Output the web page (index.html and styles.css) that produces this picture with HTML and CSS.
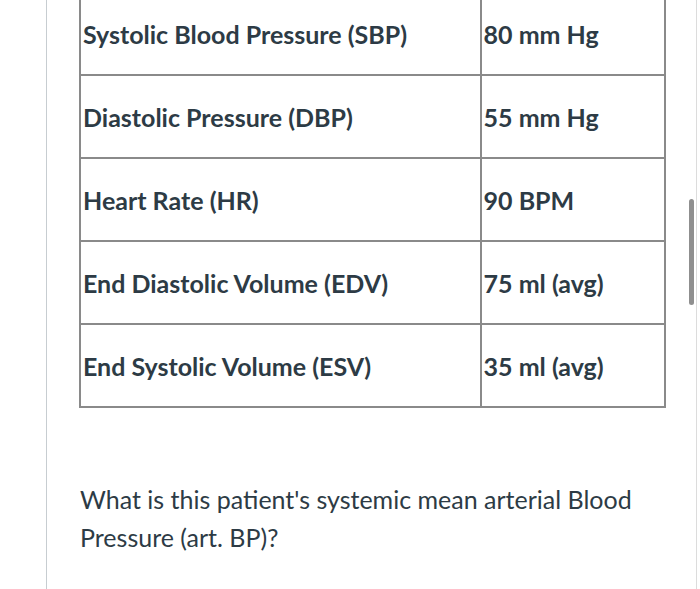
FILE: index.html
```html
<!DOCTYPE html>
<html lang="en">
<head>
<meta charset="utf-8">
<title>Question</title>
<link rel="stylesheet" href="styles.css">
</head>
<body>
<div class="page">
  <table class="vitals">
    <tr><td class="label">Systolic Blood Pressure (SBP)</td><td class="value">80 mm Hg</td></tr>
    <tr><td class="label">Diastolic Pressure (DBP)</td><td class="value">55 mm Hg</td></tr>
    <tr><td class="label">Heart Rate (HR)</td><td class="value">90 BPM</td></tr>
    <tr><td class="label">End Diastolic Volume (EDV)</td><td class="value">75 ml (avg)</td></tr>
    <tr><td class="label">End Systolic Volume (ESV)</td><td class="value">35 ml (avg)</td></tr>
  </table>
  <p class="question">What is this patient's systemic mean arterial Blood Pressure (art. BP)?</p>
</div>
<div class="scrollbar"></div>
</body>
</html>
```
FILE: styles.css
```css
html, body {
  margin: 0;
  padding: 0;
  background: #fff;
  height: 100%;
  overflow: hidden;
}
body {
  font-family: Lato, "Noto Sans", sans-serif;
  color: #2d3b45;
}
.page {
  margin-left: 46px;
  width: 651px;
  height: 620px;
  border-left: 1px solid #c7cdd1;
  border-right: 1px solid #dcdcdc;
  padding-left: 32px;
  box-sizing: border-box;
}
.vitals {
  border-collapse: collapse;
  margin-top: -9px;
  width: 587px;
}
.vitals td {
  border: 2px solid #8a8a8a;
  height: 83px;
  padding: 0 0 0 2px;
  font-size: 25px;
  font-weight: 700;
  vertical-align: middle;
  box-sizing: border-box;
}
.vitals .label { width: 402px; }
.vitals .value { width: 185px; }
.question {
  margin: 72px 0 0 1px;
  font-size: 25px;
  line-height: 38px;
  width: 570px;
}
.scrollbar {
  position: absolute;
  left: 689px;
  top: 199px;
  width: 5px;
  height: 106px;
  border-radius: 3px;
  background: #8f8f8f;
}
```
